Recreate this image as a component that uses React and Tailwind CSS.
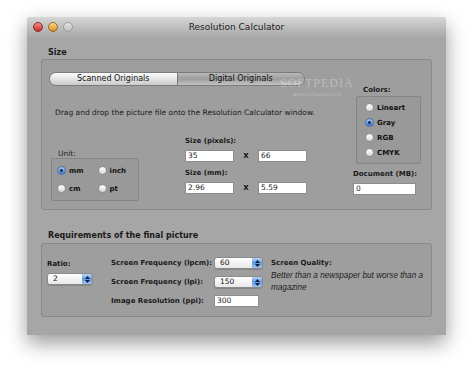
import React from 'react';

const font = { fontFamily: '"DejaVu Sans", "Liberation Sans", sans-serif' };

// Aqua style radio button
const Radio = ({ checked, label }) => (
  <div className="flex items-center gap-[3px]">
    <div
      className={
        checked
          ? 'w-[9px] h-[9px] rounded-full border border-[#4a6ea8] bg-gradient-to-b from-[#a9c8f0] to-[#3c7ad6] flex items-center justify-center'
          : 'w-[9px] h-[9px] rounded-full border border-[#8c8c8c] bg-gradient-to-b from-[#ffffff] to-[#d9d9d9]'
      }
    >
      {checked && <div className="w-[3px] h-[3px] rounded-full bg-[#1b2b45]" />}
    </div>
    <span className="text-[7px] font-bold text-[#111] leading-[10px]">{label}</span>
  </div>
);

const Field = ({ value, w = 'w-[49px]' }) => (
  <div className={`${w} h-[12px] bg-white border border-[#8d8d8d] flex items-center pl-[2px] text-[7.5px] text-[#222] leading-[10px]`}>
    {value}
  </div>
);

const Popup = ({ value, w = 'w-[49px]' }) => (
  <div className={`${w} h-[12px] flex rounded-[3px] border border-[#8a8a8a] overflow-hidden shadow-[0_1px_0_rgba(0,0,0,0.15)]`}>
    <div className="flex-1 bg-gradient-to-b from-[#ffffff] to-[#e8e8e8] flex items-center pl-[5px] text-[7.5px] text-[#111] leading-[10px]">
      {value}
    </div>
    <div className="w-[10px] bg-gradient-to-b from-[#b8d4f6] via-[#5f9ae6] to-[#9cc3f2] flex flex-col items-center justify-center gap-[1px]">
      <svg width="5" height="3" viewBox="0 0 5 3"><path d="M0 3 L2.5 0 L5 3 Z" fill="#0d1f3a" /></svg>
      <svg width="5" height="3" viewBox="0 0 5 3"><path d="M0 0 L2.5 3 L5 0 Z" fill="#0d1f3a" /></svg>
    </div>
  </div>
);

const Label = ({ children, className = '' }) => (
  <div className={`text-[7px] font-bold text-[#1a1a1a] leading-[10px] whitespace-nowrap ${className}`}>{children}</div>
);

export default function App() {
  return (
    <div className="w-[474px] h-[374px] bg-white pt-[17px] pl-[27px]" style={font}>
      <div className="relative w-[419px] h-[318px] bg-[#a6a6a6] rounded-t-[4px] shadow-[0_8px_20px_rgba(0,0,0,0.4)] flex flex-col">
        {/* title bar */}
        <div className="h-[20px] rounded-t-[4px] bg-gradient-to-b from-[#d6d6d6] to-[#a9a9a9] flex items-center">
          <div className="w-[60px] flex items-center gap-[5px] pl-[6px]">
            <div className="w-[10px] h-[10px] rounded-full bg-gradient-to-b from-[#f28a8a] to-[#c8202a] border border-[#8c2a2a]" />
            <div className="w-[10px] h-[10px] rounded-full bg-gradient-to-b from-[#fbd98a] to-[#d88f14] border border-[#9a6a1a]" />
            <div className="w-[10px] h-[10px] rounded-full bg-gradient-to-b from-[#e6e6e6] to-[#bdbdbd] border border-[#9b9b9b]" />
          </div>
          <div className="flex-1 text-center text-[9px] text-[#222] leading-[12px]">Resolution Calculator</div>
          <div className="w-[60px]" />
        </div>

        {/* Size */}
        <Label className="ml-[21px] mt-[11px] text-[8px]">Size</Label>
        <div className="ml-[14px] mt-[1px] w-[391px] h-[151px] bg-[#9e9e9e] border border-[#888] rounded-[3px] flex">
          <div className="flex-1 flex flex-col">
            {/* segmented control */}
            <div className="ml-[7px] mt-[12px] w-[256px] h-[14px] flex rounded-full border border-[#7b7b7b] overflow-hidden">
              <div className="flex-1 bg-gradient-to-b from-[#fdfdfd] via-[#e4e4e4] to-[#c9c9c9] flex items-center justify-center text-[8px] text-[#111] border-r border-[#7b7b7b]">
                Scanned Originals
              </div>
              <div className="flex-1 bg-gradient-to-b from-[#b9b9b9] via-[#9d9d9d] to-[#c4c4c4] flex items-center justify-center text-[8px] text-[#111]">
                Digital Originals
              </div>
            </div>
            <div className="ml-[13px] mt-[22px] text-[7.5px] text-[#1a1a1a] leading-[10px]">
              Drag and drop the picture file onto the Resolution Calculator window.
            </div>
            <div className="flex mt-[18px]">
              {/* unit */}
              <div className="ml-[9px] mt-[13px] flex flex-col">
                <div className="ml-[7px] text-[7.5px] text-[#222] leading-[10px]">Unit:</div>
                <div className="mt-[-1px] w-[88px] h-[43px] bg-[#999] border border-[#858585] rounded-[2px] grid grid-cols-2 content-center gap-y-[8px] pl-[5px]">
                  <Radio checked label="mm" />
                  <Radio label="inch" />
                  <Radio label="cm" />
                  <Radio label="pt" />
                </div>
              </div>
              {/* size fields */}
              <div className="ml-[46px] flex flex-col">
                <Label>Size (pixels):</Label>
                <div className="flex items-center mt-[4px]">
                  <Field value="35" />
                  <span className="w-[24px] text-center text-[7px] font-bold text-[#111]">X</span>
                  <Field value="66" />
                </div>
                <Label className="mt-[6px]">Size (mm):</Label>
                <div className="flex items-center mt-[4px]">
                  <Field value="2.96" />
                  <span className="w-[24px] text-center text-[7px] font-bold text-[#111]">X</span>
                  <Field value="5.59" />
                </div>
              </div>
            </div>
          </div>
          {/* colors + document */}
          <div className="w-[78px] flex flex-col">
            <Label className="ml-[10px] mt-[25px]">Colors:</Label>
            <div className="ml-[3px] mt-[1px] w-[65px] h-[68px] bg-[#999] border border-[#858585] rounded-[2px] flex flex-col justify-center gap-[5px] pl-[8px]">
              <Radio label="Lineart" />
              <Radio checked label="Gray" />
              <Radio label="RGB" />
              <Radio label="CMYK" />
            </div>
            <Label className="mt-[5px]">Document (MB):</Label>
            <div className="mt-[4px]">
              <Field value="0" w="w-[63px]" />
            </div>
          </div>
        </div>

        {/* Requirements */}
        <Label className="ml-[21px] mt-[21px] text-[8px]">Requirements of the final picture</Label>
        <div className="ml-[14px] mt-[2px] w-[391px] h-[74px] bg-[#9e9e9e] border border-[#888] rounded-[3px] flex">
          <div className="ml-[5px] mt-[15px] flex flex-col">
            <Label>Ratio:</Label>
            <div className="mt-[4px]">
              <Popup value="2" w="w-[46px]" />
            </div>
          </div>
          <div className="ml-[18px] mt-[13px] flex flex-col gap-[7px]">
            <div className="flex items-center">
              <Label className="w-[103px]">Screen Frequency (lpcm):</Label>
              <Popup value="60" />
            </div>
            <div className="flex items-center">
              <Label className="w-[103px]">Screen Frequency (lpi):</Label>
              <Popup value="150" />
            </div>
            <div className="flex items-center">
              <Label className="w-[103px]">Image Resolution (ppi):</Label>
              <Field value="300" w="w-[45px]" />
            </div>
          </div>
          <div className="ml-[8px] mt-[14px] flex flex-col">
            <Label>Screen Quality:</Label>
            <div className="mt-[2px] w-[160px] text-[8.2px] italic text-[#222] leading-[12px]" style={{ fontFamily: '"Liberation Sans", sans-serif' }}>
              Better than a newspaper but worse than a magazine
            </div>
          </div>
        </div>

        {/* watermark */}
        <div className="absolute left-[253px] top-[60px] flex flex-col items-center text-white/30 pointer-events-none">
          <span className="text-[12px] tracking-[1px] leading-[13px]" style={{ fontFamily: '"Liberation Serif", serif' }}>SOFTPEDIA</span>
          <span className="text-[5px] leading-[8px]">www.softpedia.com</span>
        </div>
      </div>
    </div>
  );
}
